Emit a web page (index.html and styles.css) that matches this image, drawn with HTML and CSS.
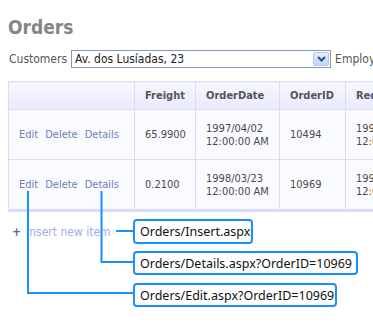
FILE: index.html
```html
<!DOCTYPE html>
<html lang="en">
<head>
  <meta charset="UTF-8">
  <title>Orders</title>
  <link rel="stylesheet" href="styles.css">
</head>
<body>
  <div id="page">
    <h1>Orders</h1>

    <div class="filters">
      <label>Customers</label>
      <div class="select">
        <span>Av. dos Lusíadas, 23</span>
        <span class="drop">
          <svg width="9" height="6" viewBox="0 0 9 6"><path d="M1 1 L4.5 4.5 L8 1" fill="none" stroke="#2d4d7d" stroke-width="2"/></svg>
        </span>
      </div>
      <label>Employee</label>
    </div>

    <table id="grid">
      <thead>
        <tr>
          <th class="c-act"></th>
          <th class="c-fr">Freight</th>
          <th class="c-od">OrderDate</th>
          <th class="c-id">OrderID</th>
          <th class="c-rd">RequiredDate</th>
        </tr>
      </thead>
      <tbody>
        <tr>
          <td class="acts"><a>Edit</a><a>Delete</a><a>Details</a></td>
          <td>65.9900</td>
          <td>1997/04/02<br>12:00:00 AM</td>
          <td>10494</td>
          <td>1997/04/30<br>12:00:00 AM</td>
        </tr>
        <tr>
          <td class="acts"><a>Edit</a><a>Delete</a><a>Details</a></td>
          <td>0.2100</td>
          <td>1998/03/23<br>12:00:00 AM</td>
          <td>10969</td>
          <td>1998/04/20<br>12:00:00 AM</td>
        </tr>
      </tbody>
    </table>

    <div class="insert"><span class="plus">+</span><a>Insert new item</a></div>

    <!-- annotations drawn over the page -->
    <svg class="wires" width="373" height="325">
      <path d="M116 231 H133" />
      <path d="M101.5 191 V262 H133" />
      <path d="M28 191 V293 H133" />
    </svg>
    <div class="note n1">Orders/Insert.aspx</div>
    <div class="note n2">Orders/Details.aspx?OrderID=10969</div>
    <div class="note n3">Orders/Edit.aspx?OrderID=10969</div>
  </div>
</body>
</html>
```

FILE: styles.css
```css
html, body {
  margin: 0;
  background: #fff;
}

#page {
  position: relative;
  width: 373px;
  height: 325px;
  overflow: hidden;
  padding: 0 8px;
  box-sizing: border-box;
  font-family: "DejaVu Sans Condensed", "DejaVu Sans", sans-serif;
  color: #444;
}

h1 {
  margin: 0;
  padding-top: 17px;
  height: 50px;
  box-sizing: border-box;
  font-size: 19px;
  line-height: 20px;
  font-weight: bold;
  color: #858585;
}

.filters {
  display: flex;
  align-items: center;
  height: 18px;
  font-size: 12px;
  color: #555;
  white-space: nowrap;
}

.filters label {
  padding-left: 1px;
}

.select {
  display: flex;
  align-items: center;
  justify-content: space-between;
  width: 260px;
  height: 18px;
  box-sizing: border-box;
  margin: 0 3px 0 4px;
  border: 1px solid #7f9db9;
  padding: 0 1px 0 3px;
  font-size: 12px;
  color: #222;
  flex-shrink: 0;
}

.drop {
  display: flex;
  align-items: center;
  justify-content: center;
  width: 16px;
  height: 14px;
  border: 1px solid #b4c8f0;
  border-radius: 2px;
  background: linear-gradient(#e6eefc, #c1d3fb);
  box-sizing: border-box;
}

#grid {
  margin-top: 13px;
  border-collapse: collapse;
  table-layout: fixed;
  width: 438px;
  font-size: 11px;
  border: 1px solid #dcdcfa;
  border-bottom: 3px solid #dcdcfa;
}

#grid th, #grid td {
  border: 1px solid #dcdcfa;
  padding: 0 10px;
  text-align: left;
  white-space: nowrap;
  line-height: 13px;
}

#grid th {
  height: 27px;
  background: linear-gradient(#f7f7ff, #e9e9fd);
  color: #555;
  font-weight: bold;
}

#grid td {
  height: 49px;
  background: #fafbff;
  color: #4a4a4a;
}

.c-act { width: 105px; }
.c-fr { width: 40px; }
.c-od { width: 63px; }
.c-id { width: 45px; }
.c-rd { width: 79px; }

#grid td.acts a {
  color: #6c7eb6;
  margin-right: 7px;
}

.insert {
  display: flex;
  align-items: center;
  margin-top: 13px;
  padding-left: 4px;
  font-size: 12px;
}

.plus {
  color: #5a6a99;
  font-weight: bold;
  margin-right: 5px;
}

.insert a {
  color: #a3abef;
}

.wires {
  position: absolute;
  left: 0;
  top: 0;
}

.wires path {
  fill: none;
  stroke: #1a90ff;
  stroke-width: 2;
}

.note {
  position: absolute;
  left: 133px;
  height: 25px;
  box-sizing: border-box;
  border: 2px solid #1a90ff;
  border-radius: 4px;
  background: #fff;
  padding: 0 5px;
  display: flex;
  align-items: center;
  font-family: "Noto Sans", "Open Sans", sans-serif;
  font-size: 12.5px;
  color: #111;
  white-space: nowrap;
}

.n1 { top: 219px; width: 120px; }
.n2 { top: 251px; width: 225px; height: 24px; }
.n3 { top: 283px; width: 204px; height: 24px; }
```
